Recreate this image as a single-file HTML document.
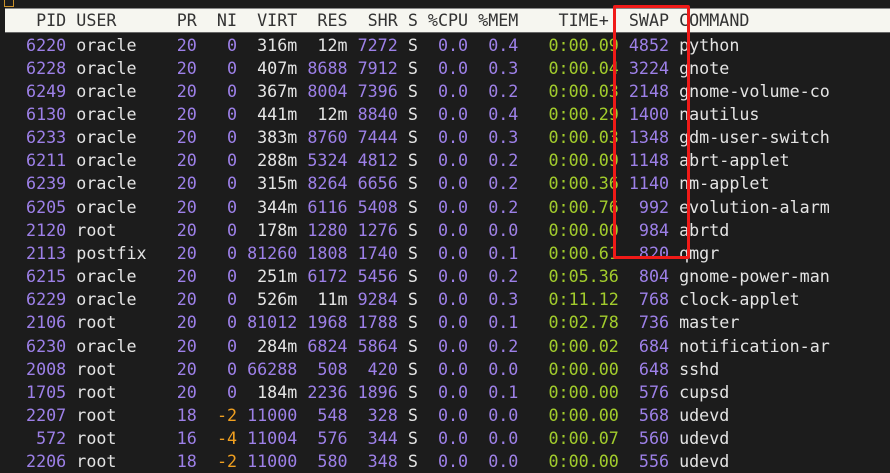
<!DOCTYPE html>
<html><head><meta charset="utf-8"><style>
html,body{margin:0;padding:0;background:#1c1c1c;width:890px;height:462px;overflow:hidden;}
.t{position:absolute;left:16px;font-family:"DejaVu Sans Mono","Liberation Mono",monospace;font-size:16.7px;line-height:23.15px;white-space:pre;color:#e4e4e4;}
.p{color:#9d80e8}.g{color:#a2cc2c}.o{color:#f0a020}
.hdr{position:absolute;left:5px;top:8px;width:885px;height:23px;background:#f6f6f0;border-top:1px solid #888;border-bottom:1px solid #666;}
.h{color:#333;top:9px}
.box{position:absolute;left:613px;top:5px;width:71px;height:248px;border:3px solid #f01a18;border-radius:2px;}
.cur{position:absolute;left:4px;top:-2px;width:8px;height:7px;border:1.5px solid #c8902a;}
</style></head><body>
<div class="cur"></div>
<div class="hdr"></div>
<div class="t h">  PID USER      PR  NI  VIRT  RES  SHR S %CPU %MEM    TIME+  SWAP COMMAND</div>
<div class="t" style="top:33.5px"><span class="p"> 6220</span> oracle    <span class="p">20   0</span>  316m  12m <span class="p">7272</span> S  <span class="p">0.0  0.4</span>   <span class="g">0:00.09</span> <span class="p">4852</span> python
<span class="p"> 6228</span> oracle    <span class="p">20   0</span>  407m <span class="p">8688 7912</span> S  <span class="p">0.0  0.3</span>   <span class="g">0:00.04</span> <span class="p">3224</span> gnote
<span class="p"> 6249</span> oracle    <span class="p">20   0</span>  367m <span class="p">8004 7396</span> S  <span class="p">0.0  0.2</span>   <span class="g">0:00.03</span> <span class="p">2148</span> gnome-volume-co
<span class="p"> 6130</span> oracle    <span class="p">20   0</span>  441m  12m <span class="p">8840</span> S  <span class="p">0.0  0.4</span>   <span class="g">0:00.29</span> <span class="p">1400</span> nautilus
<span class="p"> 6233</span> oracle    <span class="p">20   0</span>  383m <span class="p">8760 7444</span> S  <span class="p">0.0  0.3</span>   <span class="g">0:00.03</span> <span class="p">1348</span> gdm-user-switch
<span class="p"> 6211</span> oracle    <span class="p">20   0</span>  288m <span class="p">5324 4812</span> S  <span class="p">0.0  0.2</span>   <span class="g">0:00.09</span> <span class="p">1148</span> abrt-applet
<span class="p"> 6239</span> oracle    <span class="p">20   0</span>  315m <span class="p">8264 6656</span> S  <span class="p">0.0  0.2</span>   <span class="g">0:00.36</span> <span class="p">1140</span> nm-applet
<span class="p"> 6205</span> oracle    <span class="p">20   0</span>  344m <span class="p">6116 5408</span> S  <span class="p">0.0  0.2</span>   <span class="g">0:00.76</span> <span class="p"> 992</span> evolution-alarm
<span class="p"> 2120</span> root      <span class="p">20   0</span>  178m <span class="p">1280 1276</span> S  <span class="p">0.0  0.0</span>   <span class="g">0:00.00</span> <span class="p"> 984</span> abrtd
<span class="p"> 2113</span> postfix   <span class="p">20   0 81260 1808 1740</span> S  <span class="p">0.0  0.1</span>   <span class="g">0:00.61</span> <span class="p"> 820</span> qmgr
<span class="p"> 6215</span> oracle    <span class="p">20   0</span>  251m <span class="p">6172 5456</span> S  <span class="p">0.0  0.2</span>   <span class="g">0:05.36</span> <span class="p"> 804</span> gnome-power-man
<span class="p"> 6229</span> oracle    <span class="p">20   0</span>  526m  11m <span class="p">9284</span> S  <span class="p">0.0  0.3</span>   <span class="g">0:11.12</span> <span class="p"> 768</span> clock-applet
<span class="p"> 2106</span> root      <span class="p">20   0 81012 1968 1788</span> S  <span class="p">0.0  0.1</span>   <span class="g">0:02.78</span> <span class="p"> 736</span> master
<span class="p"> 6230</span> oracle    <span class="p">20   0</span>  284m <span class="p">6824 5864</span> S  <span class="p">0.0  0.2</span>   <span class="g">0:00.02</span> <span class="p"> 684</span> notification-ar
<span class="p"> 2008</span> root      <span class="p">20   0 66288  508  420</span> S  <span class="p">0.0  0.0</span>   <span class="g">0:00.00</span> <span class="p"> 648</span> sshd
<span class="p"> 1705</span> root      <span class="p">20   0</span>  184m <span class="p">2236 1896</span> S  <span class="p">0.0  0.1</span>   <span class="g">0:00.00</span> <span class="p"> 576</span> cupsd
<span class="p"> 2207</span> root      <span class="p">18</span>  <span class="o">-2</span> <span class="p">11000  548  328</span> S  <span class="p">0.0  0.0</span>   <span class="g">0:00.00</span> <span class="p"> 568</span> udevd
<span class="p">  572</span> root      <span class="p">16</span>  <span class="o">-4</span> <span class="p">11004  576  344</span> S  <span class="p">0.0  0.0</span>   <span class="g">0:00.07</span> <span class="p"> 560</span> udevd
<span class="p"> 2206</span> root      <span class="p">18</span>  <span class="o">-2</span> <span class="p">11000  580  348</span> S  <span class="p">0.0  0.0</span>   <span class="g">0:00.00</span> <span class="p"> 556</span> udevd</div>
<div class="box"></div>
</body></html>
